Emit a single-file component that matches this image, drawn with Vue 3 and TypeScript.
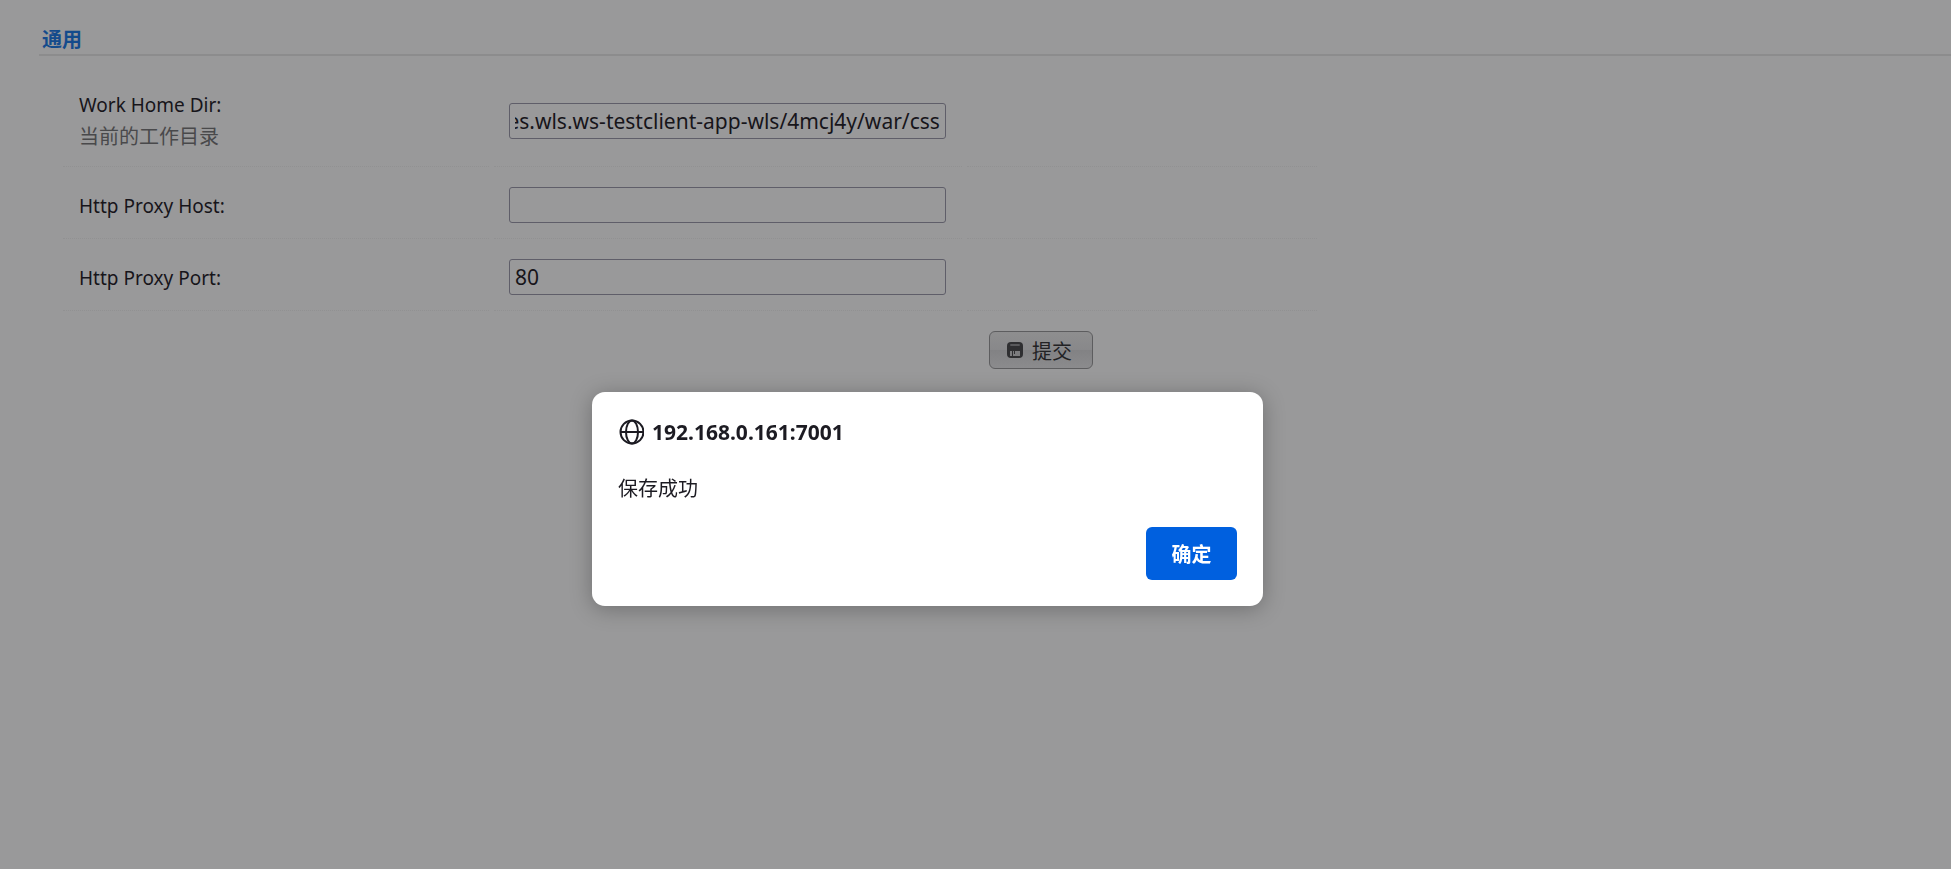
<script setup lang="ts">
import { nextTick, onMounted, ref } from 'vue'

interface Field {
  id: string
  label: string
  hint?: string
  value: string
}

const fields = ref<Field[]>([
  {
    id: 'work-dir',
    label: 'Work Home Dir:',
    hint: '当前的工作目录',
    value: 'servers/AdminServer/tmp/_WL_internal/com.oracle.webservices.wls.ws-testclient-app-wls/4mcj4y/war/css',
  },
  { id: 'proxy-host', label: 'Http Proxy Host:', value: '' },
  { id: 'proxy-port', label: 'Http Proxy Port:', value: '80' },
])

const form = ref<HTMLFormElement | null>(null)
const open = ref(true)

// Keep the end of a long path in view
onMounted(async () => {
  await nextTick()
  form.value?.querySelectorAll('input').forEach((el) => {
    el.scrollLeft = el.scrollWidth
  })
})
</script>

<template>
  <div class="page">
    <main>
      <h1>通用</h1>
      <form ref="form" @submit.prevent="open = true">
        <div v-for="f in fields" :key="f.id" class="row" :class="{ tall: f.hint }">
          <div class="cell name">
            <label :for="f.id">{{ f.label }}</label>
            <span v-if="f.hint" class="hint">{{ f.hint }}</span>
          </div>
          <div class="cell"><input :id="f.id" v-model="f.value" type="text" /></div>
          <div class="cell"></div>
        </div>
        <div class="actions">
          <button type="submit" class="submit">
            <svg width="16" height="16" viewBox="0 0 16 16" aria-hidden="true">
              <rect x="0" y="0" width="16" height="16" rx="4" fill="#2f2f31" />
              <rect x="3" y="2" width="10" height="2" rx="1" fill="#59595b" />
              <path d="M3 9h2v5H3zM6 9h7v5H6z" fill="#7c7c7e" />
              <path d="M7 9h1v3H7z" fill="#2f2f31" />
            </svg>
            提交
          </button>
        </div>
      </form>
    </main>
    <div v-if="open" class="overlay">
      <section class="dialog" role="alertdialog" aria-labelledby="origin" aria-describedby="message">
        <h2 id="origin">
          <svg width="26" height="26" viewBox="0 0 26 26" fill="none" stroke="#1c1b22" stroke-width="2" aria-hidden="true">
            <circle cx="14" cy="13" r="11.5" />
            <ellipse cx="14" cy="13" rx="6" ry="11.5" />
            <path d="M2.5 13h23" />
          </svg>
          192.168.0.161:7001
        </h2>
        <p id="message">保存成功</p>
        <button type="button" class="ok" @click="open = false">确定</button>
      </section>
    </div>
  </div>
</template>

<style>
body {
  margin: 0;
  background: #99999a;
}
</style>

<style scoped>
.page {
  min-height: 100vh;
  font-family: 'Noto Sans', 'Noto Sans CJK SC', sans-serif;
  font-size: 19px;
  color: #17151a;
  overflow: hidden;
}
main {
  padding: 24px 0 0 39px;
}
h1 {
  margin: 0;
  padding: 0 3px;
  height: 30px;
  line-height: 32px;
  font-size: 20px;
  color: #144b8c;
  border-bottom: 2px solid #8c8c8d;
}
form {
  width: 66%;
  max-width: 1254px;
  padding: 28px 0 0 24px;
}
.row {
  display: grid;
  grid-template-columns: 426fr 468fr 350fr;
  column-gap: 5px;
  min-height: 72px;
}
.row.tall {
  min-height: 83px;
}
.cell {
  display: flex;
  align-items: center;
  padding: 4px 16px 0 15px;
  border-bottom: 1px dotted #919192;
}
.name {
  flex-direction: column;
  align-items: flex-start;
  justify-content: center;
  padding: 7px 16px 0;
}
.tall .cell {
  padding-top: 0;
  padding-bottom: 8px;
}
label,
.hint {
  line-height: 32px;
}
.hint {
  font-size: 20px;
  color: #49494b;
}
input {
  box-sizing: border-box;
  width: 100%;
  height: 36px;
  padding: 0 5px;
  border: 1px solid #5f5e69;
  border-radius: 3px;
  background: transparent;
  color: #17151a;
  font-family: inherit;
  font-size: 21px;
}
.actions {
  display: flex;
  justify-content: flex-end;
  padding: 20px 224px 0 0;
}
.submit {
  display: flex;
  align-items: center;
  gap: 9px;
  height: 38px;
  padding: 0 20px 0 17px;
  border: 1px solid #5d5d5f;
  border-radius: 6px;
  background: linear-gradient(#8e8e8f, #88888a 50%, #828284 51%, #8b8b8d);
  color: #222224;
  font-family: inherit;
  font-size: 20px;
}
.overlay {
  position: fixed;
  inset: 0;
  display: flex;
  justify-content: center;
  align-items: flex-start;
  padding: 392px 96px 0 0;
}
.dialog {
  display: flex;
  flex-direction: column;
  box-sizing: border-box;
  width: 671px;
  padding: 26px;
  border-radius: 13px;
  background: #fff;
  box-shadow: 0 3px 22px rgba(0, 0, 0, 0.28);
  color: #1c1b22;
}
h2 {
  display: flex;
  align-items: center;
  gap: 8px;
  margin: 0;
  height: 28px;
  font-size: 21px;
  line-height: 28px;
}
#message {
  margin: 28px 0 23px;
  font-size: 20px;
  line-height: 30px;
}
.ok {
  align-self: flex-end;
  width: 91px;
  height: 53px;
  border: 0;
  border-radius: 6px;
  background: #0060df;
  color: #fff;
  font-family: inherit;
  font-size: 20px;
  font-weight: 700;
}
</style>
